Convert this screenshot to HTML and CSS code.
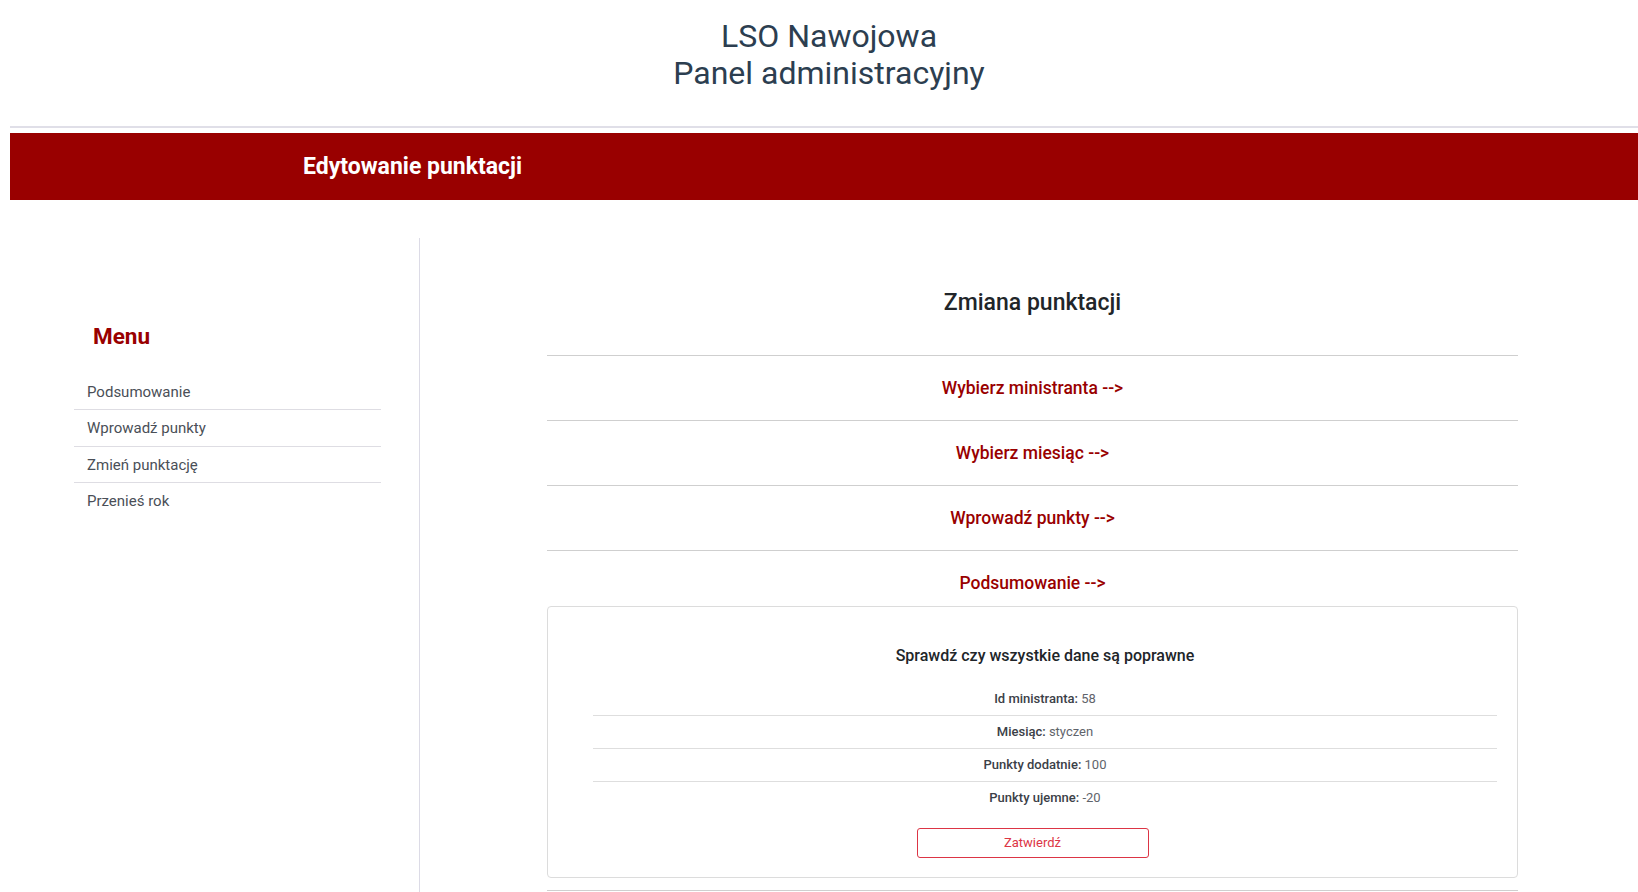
FILE: index.html
```html
<!DOCTYPE html>
<html lang="pl">
<head>
    <meta charset="UTF-8">
    <meta name="viewport" content="width=device-width, initial-scale=1.0">
    <title>LSO Nawojowa - Panel administracyjny</title>
    <link rel="stylesheet" href="styles.css">
</head>
<body>
    <div class="page">
        <header class="site-header">
            <h1 class="site-title">LSO Nawojowa<br>Panel administracyjny</h1>
        </header>

        <div class="title-bar">
            <h2>Edytowanie punktacji</h2>
        </div>

        <div class="layout">
            <aside class="sidebar">
                <h3 class="sidebar-title">Menu</h3>
                <ul class="menu">
                    <li><a href="#">Podsumowanie</a></li>
                    <li><a href="#">Wprowadź punkty</a></li>
                    <li><a href="#">Zmień punktację</a></li>
                    <li><a href="#">Przenieś rok</a></li>
                </ul>
            </aside>

            <main class="content">
                <h2 class="content-title">Zmiana punktacji</h2>

                <hr class="divider">
                <div class="step"><a href="#">Wybierz ministranta --&gt;</a></div>
                <hr class="divider">
                <div class="step"><a href="#">Wybierz miesiąc --&gt;</a></div>
                <hr class="divider">
                <div class="step"><a href="#">Wprowadź punkty --&gt;</a></div>
                <hr class="divider">
                <div class="step step-last"><a href="#">Podsumowanie --&gt;</a></div>

                <div class="summary-card">
                    <h4 class="summary-title">Sprawdź czy wszystkie dane są poprawne</h4>
                    <ul class="summary-list">
                        <li><b>Id ministranta:</b> 58</li>
                        <li><b>Miesiąc:</b> styczen</li>
                        <li><b>Punkty dodatnie:</b> 100</li>
                        <li><b>Punkty ujemne:</b> -20</li>
                    </ul>
                    <div class="summary-actions">
                        <button type="button" class="btn-confirm">Zatwierdź</button>
                    </div>
                </div>

                <hr class="divider">
            </main>
        </div>
    </div>
</body>
</html>
```

FILE: styles.css
```css
body {
    margin: 0;
    font-family: 'Roboto', 'Liberation Sans', sans-serif;
    background-color: #fff;
    color: #212529;
    overflow: hidden;
}

.page {
    padding-left: 10px;
}

/* naglowek */
.site-header {
    padding: 18px 0 33px 10px;
    border-bottom: 2px solid #e0dfe8;
    margin-bottom: 5px;
}

.site-title {
    margin: 0;
    font-size: 32px;
    font-weight: 400;
    line-height: 1.17;
    text-align: center;
    color: #2c3e50;
}

.title-bar {
    height: 67px;
    display: flex;
    align-items: center;
    padding-left: 293px;
    background-color: #990000;
}

.title-bar h2 {
    margin: 0;
    font-size: 23px;
    font-weight: 700;
    color: #fff;
}

/* uklad */
.layout {
    display: flex;
    margin-top: 38px;
}

.sidebar {
    width: 410px;
    flex-shrink: 0;
    box-sizing: border-box;
    padding: 85px 38px 0 64px;
    border-right: 1px solid #dcdbe6;
    min-height: 660px;
}

.sidebar-title {
    margin: 0 0 24px;
    padding-left: 19px;
    font-size: 22.5px;
    font-weight: 700;
    line-height: 1.2;
    color: #990000;
}

.menu {
    list-style: none;
    margin: 0;
    padding: 0;
}

.menu li {
    border-bottom: 1px solid #dedde3;
}

.menu li:last-child {
    border-bottom: none;
}

.menu a {
    display: block;
    padding: 7px 13px 6.5px;
    font-size: 15px;
    line-height: 22px;
    color: #4a4f57;
    text-decoration: none;
}

.content {
    flex: 1;
    padding: 51px 120px 0 127px;
}

.content-title {
    margin: 0 0 39px;
    font-size: 23px;
    font-weight: 500;
    line-height: 1.2;
    text-align: center;
    color: #212529;
}

.divider {
    margin: 0;
    border: none;
    border-top: 1px solid #cfcfcf;
}

.step {
    padding: 22px 0 21px;
    text-align: center;
    font-size: 17.5px;
    font-weight: 500;
    line-height: 21px;
}

.step a {
    color: #990000;
    text-decoration: none;
}

.step-last {
    padding-bottom: 12px;
}

/* podsumowanie */
.summary-card {
    border: 1px solid #dcdcdc;
    border-radius: 4px;
    padding: 39px 20px 19px;
    margin-bottom: 12px;
}

.summary-title {
    margin: 0 0 17px;
    padding-left: 25px;
    font-size: 16px;
    font-weight: 500;
    line-height: 1.2;
    text-align: center;
    color: #212529;
}

.summary-list {
    list-style: none;
    margin: 0 0 0 25px;
    padding: 0;
}

.summary-list li {
    padding: 6px 0;
    font-size: 13px;
    line-height: 20px;
    text-align: center;
    color: #5f646b;
    border-bottom: 1px solid #dedede;
}

.summary-list li:last-child {
    border-bottom: none;
}

.summary-list b {
    font-weight: 500;
    color: #3b4047;
}

.summary-actions {
    margin-top: 14px;
    text-align: center;
}

.btn-confirm {
    width: 232px;
    height: 30px;
    border: 1px solid #dc3545;
    border-radius: 3px;
    background-color: #fff;
    color: #dc3545;
    font-family: 'Roboto', sans-serif;
    font-size: 13px;
    cursor: pointer;
}
```
